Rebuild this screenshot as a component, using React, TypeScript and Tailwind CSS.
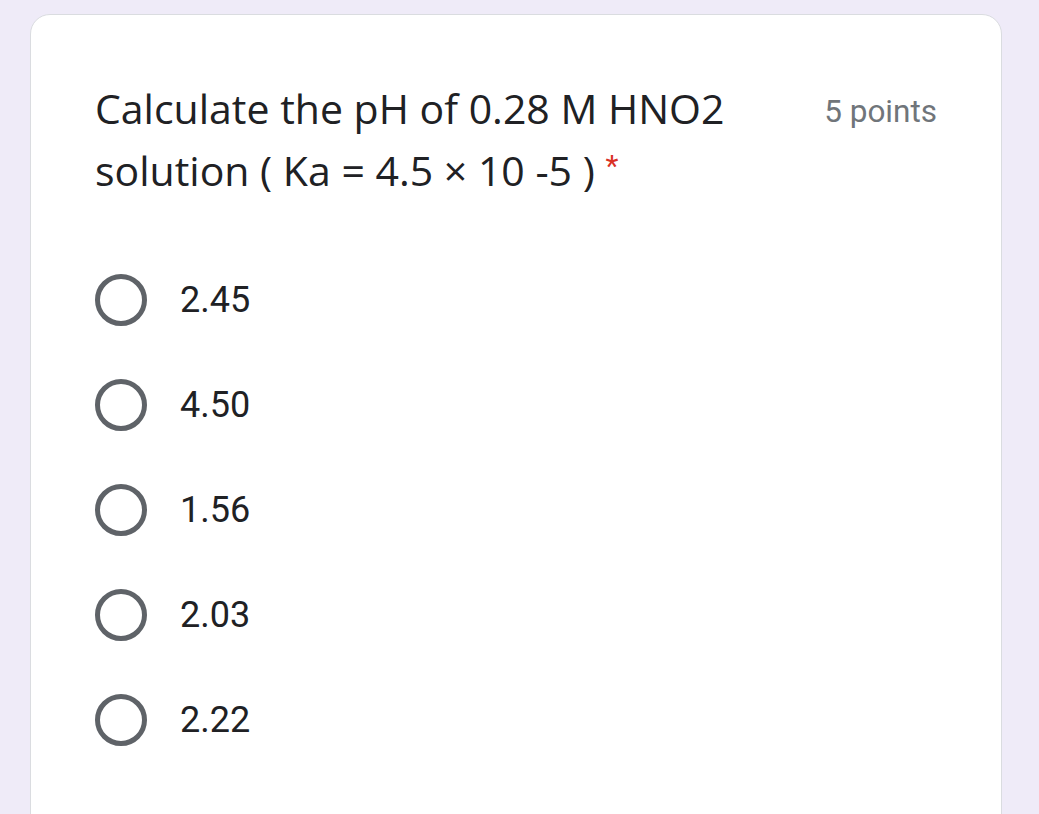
import React from "react";

const options = ["2.45", "4.50", "1.56", "2.03", "2.22"];

export default function App() {
  return (
    <div className="w-[1039px] h-[814px] overflow-hidden bg-[#efebf8] pt-[14px] pl-[30px] pr-[37px]">
      <div className="h-[820px] bg-white border border-[#dadce0] rounded-[20px] px-[64px] pt-[62px]">
        <div className="flex justify-between items-start">
          <div
            className="text-[41px] leading-[62px] text-[#202124] w-[680px]"
            style={{ fontFamily: '"Open Sans", Roboto, sans-serif' }}
          >
            Calculate the pH of 0.28 M HNO2 solution ( Ka = 4.5 × 10 -5 ){" "}
            <span
              className="text-[#d93025] text-[30px] leading-none align-[10px]"
              style={{ fontFamily: "Roboto, sans-serif" }}
            >
              *
            </span>
          </div>
          <div
            className="text-[31.5px] leading-[62px] text-[#70757a] whitespace-nowrap mt-[4px]"
            style={{ fontFamily: "Roboto, sans-serif" }}
          >
            5 points
          </div>
        </div>
        <div className="mt-[46px] flex flex-col">
          {options.map((o) => (
            <div key={o} className="flex items-center h-[105px]">
              <div className="w-[52px] h-[52px] rounded-full border-[5px] border-[#5f6368]" />
              <span
                className="ml-[33px] text-[36px] text-[#202124]"
                style={{ fontFamily: "Roboto, sans-serif" }}
              >
                {o}
              </span>
            </div>
          ))}
        </div>
      </div>
    </div>
  );
}
